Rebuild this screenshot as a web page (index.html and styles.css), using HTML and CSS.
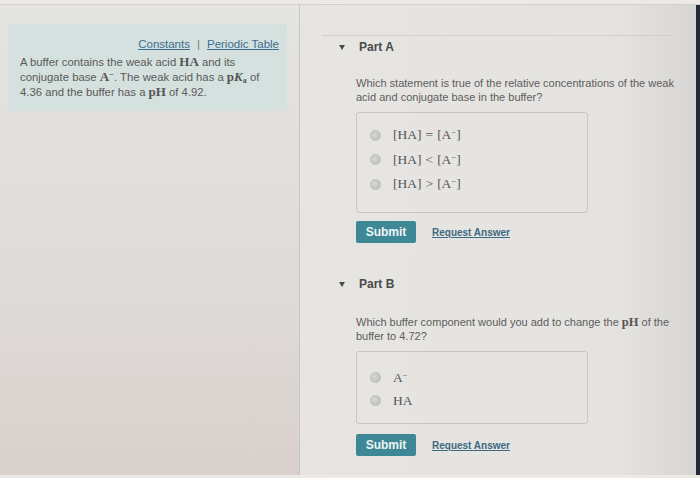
FILE: index.html
```html
<!DOCTYPE html>
<html>
<head>
<meta charset="utf-8">
<link rel="stylesheet" href="styles.css">
</head>
<body>
<div class="screen">
  <div class="left">
    <div class="info">
      <div class="links"><a href="#">Constants</a><span class="sep">|</span><a href="#">Periodic Table</a></div>
      <p class="intro">A buffer contains the weak acid <b class="m">HA</b> and its<br>conjugate base <b class="m">A<sup>−</sup></b>. The weak acid has a <b class="m">p<i>K</i><sub>a</sub></b> of<br>4.36 and the buffer has a <b class="m">pH</b> of 4.92.</p>
    </div>
  </div>
  <div class="right">
    <div class="part part-a">
      <div class="head"><span class="tri"></span><span class="title">Part A</span></div>
      <div class="body">
        <p class="q">Which statement is true of the relative concentrations of the weak<br>acid and conjugate base in the buffer?</p>
        <div class="choices c3">
          <div class="opt"><span class="radio"></span><span class="lbl">[HA]<span class="op">=</span>[A<sup>−</sup>]</span></div>
          <div class="opt"><span class="radio"></span><span class="lbl">[HA]<span class="op">&lt;</span>[A<sup>−</sup>]</span></div>
          <div class="opt"><span class="radio"></span><span class="lbl">[HA]<span class="op">&gt;</span>[A<sup>−</sup>]</span></div>
        </div>
        <div class="actions"><button class="submit">Submit</button><a class="req" href="#">Request Answer</a></div>
      </div>
    </div>
    <div class="part part-b">
      <div class="head"><span class="tri"></span><span class="title">Part B</span></div>
      <div class="body">
        <p class="q">Which buffer component would you add to change the <b class="m">pH</b> of the<br>buffer to 4.72?</p>
        <div class="choices c2">
          <div class="opt"><span class="radio"></span><span class="lbl">A<sup>−</sup></span></div>
          <div class="opt"><span class="radio"></span><span class="lbl">HA</span></div>
        </div>
        <div class="actions"><button class="submit">Submit</button><a class="req" href="#">Request Answer</a></div>
      </div>
    </div>
  </div>
  <div class="edge"></div>
</div>
</body>
</html>
```
FILE: styles.css
```css
html, body {
  margin: 0;
  padding: 0;
}
body {
  width: 700px;
  height: 478px;
  overflow: hidden;
  font-family: "Liberation Sans", Arial, sans-serif;
  color: #5d5d5d;
  background: #ece9e6;
}
.screen {
  display: flex;
  box-sizing: border-box;
  height: 471px;
  margin-top: 4px;
  border-top: 1px solid #d2d0cd;
  background: linear-gradient(180deg, #e6e5e2 0%, #e2dfdc 60%, #dcd5d1 100%);
}
.left {
  flex: none;
  width: 300px;
  border-right: 1px solid #c9c6c3;
  box-sizing: border-box;
  padding: 19px 12px 0 8px;
  background: linear-gradient(180deg, #e4e4e1 0%, #ded9d6 70%, #d8d0cd 100%);
}
.info {
  background: #d5e1de;
  height: 87px;
  box-sizing: border-box;
  padding: 13px 8px 0 12px;
}
.links {
  text-align: right;
  font-size: 11.5px;
  line-height: 14px;
}
.links a {
  color: #3b6f8f;
  text-decoration: underline;
}
.sep {
  color: #777;
  margin: 0 7px;
}
.intro {
  margin: 4px 0 0;
  font-size: 11.3px;
  line-height: 15px;
  color: #5a5a5a;
  white-space: nowrap;
}
.m {
  font-family: "Liberation Serif", "Times New Roman", serif;
  font-size: 13px;
  line-height: 1;
  font-weight: bold;
  color: #555;
}
.m sup, .lbl sup {
  font-size: 8.5px;
  line-height: 0;
  vertical-align: 4px;
}
.m sub {
  font-size: 8px;
  line-height: 0;
  vertical-align: -2px;
}
.right {
  flex: 1;
  min-width: 0;
  padding: 0 0 0 39px;
  background: linear-gradient(90deg, #e6e5e2 0%, #e4e3e0 80%, #d8d6d4 100%);
}
.part-a {
  border-top: 1px solid #d0cfcc;
  margin-top: 30px;
  margin-right: 24px;
  margin-left: -17px;
  padding-left: 17px;
}
.head {
  display: flex;
  align-items: center;
  height: 20px;
  margin-top: 1px;
}
.tri {
  width: 0;
  height: 0;
  border-left: 3.5px solid transparent;
  border-right: 3.5px solid transparent;
  border-top: 5px solid #4a4a4a;
  margin-right: 14px;
}
.title {
  font-size: 12px;
  font-weight: bold;
  color: #4a4a4a;
}
.body {
  padding-left: 17px;
}
.q {
  margin: 19px 0 0;
  font-size: 11px;
  line-height: 14px;
  color: #5d5d5d;
  white-space: nowrap;
}
.q .m {
  font-size: 12.5px;
}
.choices {
  margin-top: 8px;
  width: 232px;
  box-sizing: border-box;
  border: 1px solid #c8c7c4;
  border-radius: 3px;
  padding: 10px 0 0 13px;
}
.c3 { height: 101px; }
.c3 .opt { height: 24.5px; }
.c2 { height: 73px; padding-top: 14px; }
.c2 .opt { height: 23px; }
.opt {
  display: flex;
  align-items: center;
  height: 24px;
}
.radio {
  width: 9px;
  height: 9px;
  border-radius: 50%;
  background: radial-gradient(circle at 40% 40%, #d8d8d6, #b7b7b5);
  border: 1px solid #bdbdbb;
  margin-right: 12px;
}
.lbl {
  font-family: "Liberation Serif", "Times New Roman", serif;
  font-size: 13.5px;
  color: #555;
}
.op {
  margin: 0 4px;
}
.actions {
  display: flex;
  align-items: center;
  margin-top: 8px;
}
.submit {
  width: 60px;
  height: 22px;
  border: none;
  border-radius: 2px;
  background: #3e8796;
  color: #eef4f5;
  font-family: "Liberation Sans", Arial, sans-serif;
  font-size: 12px;
  font-weight: bold;
  padding: 0;
}
.req {
  margin-left: 16px;
  font-size: 10px;
  font-weight: bold;
  color: #3d6a82;
  text-decoration: underline;
}
.part-b {
  margin-top: 31px;
}
.part-b .q {
  margin-top: 21px;
}
.part-b .actions {
  margin-top: 10px;
}
.edge {
  flex: none;
  width: 4px;
  background: #222a3a;
}
```
